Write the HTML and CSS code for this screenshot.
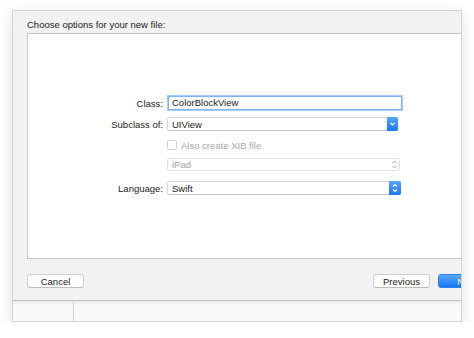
FILE: index.html
```html
<!DOCTYPE html>
<html lang="en">

<head>
  <meta charset="UTF-8">
  <meta name="viewport" content="width=device-width, initial-scale=1.0">
  <title>Choose options</title>
  <link rel="stylesheet" href="styles.css">
</head>

<body>
  <div class="window">
    <div class="sheet">
      <p class="title">Choose options for your new file:</p>

      <div class="options">
        <div class="row row-class">
          <label class="label">Class:</label>
          <div class="text-field">ColorBlockView</div>
        </div>

        <div class="row row-sub">
          <label class="label">Subclass of:</label>
          <div class="popup">
            <span>UIView</span>
            <span class="popup-arrow">
              <svg width="11" height="14" viewBox="0 0 11 14">
                <path d="M3.5 6 L5.5 8 L7.5 6" fill="none" stroke="#fff" stroke-width="1.2" />
              </svg>
            </span>
          </div>
        </div>

        <div class="row row-check">
          <span class="label"></span>
          <div class="check"><span class="box"></span>Also create XIB file</div>
        </div>

        <div class="row row-ipad">
          <span class="label"></span>
          <div class="popup disabled">
            <span>iPad</span>
            <span class="popup-arrow plain">
              <svg width="11" height="13" viewBox="0 0 11 13">
                <path d="M3.5 5 L5.5 3 L7.5 5 M3.5 8 L5.5 10 L7.5 8" fill="none" stroke="#a8a8a8" stroke-width="1" />
              </svg>
            </span>
          </div>
        </div>

        <div class="row row-lang">
          <label class="label">Language:</label>
          <div class="popup">
            <span>Swift</span>
            <span class="popup-arrow">
              <svg width="12" height="14" viewBox="0 0 12 14">
                <path d="M4 5.5 L6 3.5 L8 5.5 M4 8.5 L6 10.5 L8 8.5" fill="none" stroke="#fff" stroke-width="1.1" />
              </svg>
            </span>
          </div>
        </div>
      </div>

      <div class="buttons">
        <button type="button" class="btn">Cancel</button>
        <span class="spacer"></span>
        <button type="button" class="btn">Previous</button>
        <button type="button" class="btn primary">Next</button>
      </div>
    </div>

    <div class="strip">
      <div class="strip-left"></div>
    </div>
  </div>
</body>

</html>
```

FILE: styles.css
```css
body {
  font-family: "Liberation Sans", Arial, sans-serif;
  font-size: 9.5px;
  color: #222;
  margin: 0;
  padding: 0;
  background-color: #fff;
}

.window {
  margin: 10px 0 0 12px;
  width: 448px;
  height: 310px;
  border: 1px solid #d4d4d4;
  background-color: #fafafa;
  box-shadow: 0 4px 14px rgba(0, 0, 0, 0.12);
  overflow: hidden;
}

.sheet {
  height: 289px;
  background-color: #f2f2f2;
  border-bottom: 1px solid #c4c4c4;
  box-shadow: 0 1px 3px rgba(0, 0, 0, 0.12);
  padding-left: 14px;
}

.title {
  margin: 0;
  padding-top: 8px;
  height: 14px;
  line-height: 11px;
}

.options {
  width: 460px;
  height: 226px;
  background-color: #fff;
  border: 1px solid #c6c6c6;
  padding-top: 61px;
  box-sizing: border-box;
}

.row {
  display: flex;
  align-items: center;
  gap: 4px;
}

.label {
  width: 135px;
  text-align: right;
  color: #222;
}

.row-class {
  height: 16px;
}

.row-sub {
  height: 14px;
  margin-top: 6px;
}

.row-check {
  height: 14px;
  margin-top: 7px;
}

.row-ipad {
  height: 13px;
  margin-top: 6px;
}

.row-lang {
  height: 14px;
  margin-top: 10px;
}

.text-field {
  width: 229px;
  height: 12px;
  line-height: 12px;
  padding-left: 3px;
  border: 1px solid #7eb2f0;
  box-shadow: 0 0 0 1px #a9cdf6;
  margin-left: 1px;
  background-color: #fff;
}

.popup {
  display: flex;
  align-items: center;
  justify-content: space-between;
  width: 231px;
  height: 14px;
  box-sizing: border-box;
  padding-left: 4px;
  border: 1px solid #d8d8d8;
  border-bottom-color: #c4c4c4;
  border-radius: 2px;
  background-color: #fff;
}

.row-lang .popup {
  width: 234px;
}

.popup.disabled {
  width: 233px;
  height: 13px;
  color: #a6a6a6;
  border-color: #e2e2e2;
}

.popup-arrow {
  display: flex;
  align-items: center;
  justify-content: center;
  margin-right: -1px;
  height: 14px;
  border-radius: 0 2px 2px 0;
  background: linear-gradient(#5aa5fa, #1a78f2);
}

.popup-arrow.plain {
  background: none;
  height: 13px;
}

.check {
  display: flex;
  align-items: center;
  gap: 4px;
  color: #a8a8a8;
}

.box {
  width: 8px;
  height: 8px;
  border: 1px solid #d4d4d4;
  border-radius: 2px;
  background-color: #fff;
}

.buttons {
  display: flex;
  align-items: center;
  gap: 8px;
  margin-top: 15px;
  width: 469px;
}

.spacer {
  flex: 1;
}

.btn {
  height: 14px;
  padding: 0;
  font-family: "Liberation Sans", Arial, sans-serif;
  font-size: 9.5px;
  color: #222;
  background-color: #fff;
  border: 1px solid #d0d0d0;
  border-bottom-color: #bcbcbc;
  border-radius: 3px;
  width: 57px;
}

.btn.primary {
  width: 58px;
  color: #fff;
  border-color: #2d83ee;
  background: linear-gradient(#5aa8fb, #1776f2);
}

.strip {
  height: 20px;
  display: flex;
}

.strip-left {
  width: 60px;
  border-right: 1px solid #d2d2d2;
}
```
